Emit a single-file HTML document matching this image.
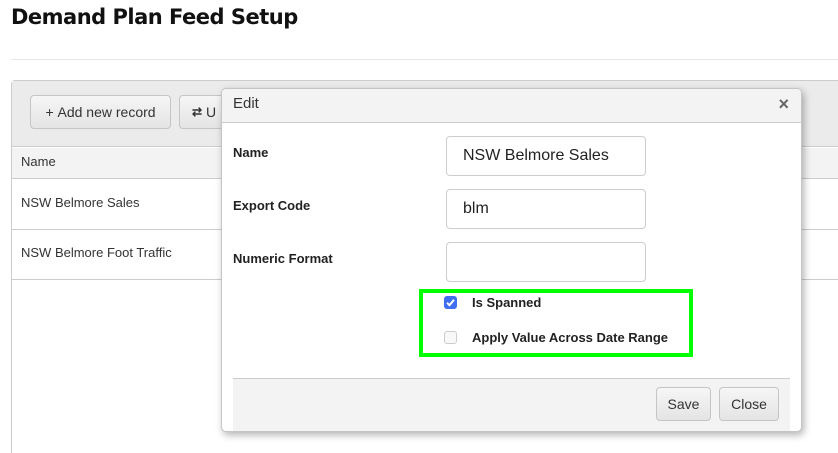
<!DOCTYPE html>
<html><head><meta charset="utf-8"><style>
*{box-sizing:border-box}
html,body{margin:0;width:838px;height:453px;overflow:hidden}
body{background:#fff;font-family:"Liberation Sans",sans-serif;color:#333;position:relative}
.abs{position:absolute}
h1{position:absolute;left:11px;top:5px;margin:0;font-family:"DejaVu Sans","Liberation Sans",sans-serif;font-size:21px;font-weight:bold;color:#111;letter-spacing:-0.5px}
.hr{left:11px;top:59px;width:827px;height:1px;background:#e6e6e6}
.grid{left:11px;top:80px;width:840px;height:380px;border:1px solid #ccc;border-radius:4px 0 0 0}
.tool{left:12px;top:81px;width:830px;height:66px;background:#ebebeb;border-bottom:1px solid #ccc}
.btn{border:1px solid #c5c5c5;border-radius:4px;background:linear-gradient(#f6f6f6,#e4e4e4);font-size:14px;color:#333;display:flex;align-items:center;justify-content:center}
.head{left:12px;top:148px;width:830px;height:31px;background:#f3f3f3;border-bottom:1px solid #ccc;font-size:13px;padding:6px 9px}
.row{left:12px;width:830px;height:50px;border-bottom:1px solid #ccc;font-size:13px;padding:15px 9px}
.dlg{left:221px;top:88px;width:581px;height:344px;background:#fff;border:1px solid #c5c5c5;border-radius:5px;box-shadow:2px 3px 8px rgba(0,0,0,.3);overflow:hidden}
.title{left:0;top:0;width:100%;height:34px;background:#f3f3f3;border-bottom:1px solid #ccc;font-size:15px;padding:6px 11px;color:#333}
.lbl{left:11px;font-size:13px;font-weight:bold;color:#222}
.inp{left:224px;width:200px;height:40px;border:1px solid #ccc;border-radius:4px;font-size:16px;padding:10px 16px;color:#222}
.foot{left:11px;top:289px;width:557px;height:55px;background:#f3f3f3;border-top:1px solid #ccc}
.green{left:419px;top:289px;width:274px;height:68px;border:4px solid #00ff00}
.cb{width:13px;height:13px;border-radius:3px}
.cl{font-size:13px;font-weight:bold;color:#222}
</style></head><body>
<h1>Demand Plan Feed Setup</h1>
<div class="abs hr"></div>
<div class="abs grid"></div>
<div class="abs tool"></div>
<div class="abs btn" style="left:30px;top:95px;width:141px;height:34px">+&nbsp;Add new record</div>
<div class="abs btn" style="left:179px;top:95px;width:60px;height:34px;justify-content:flex-start;padding-left:12px"><span style="font-size:12px;font-weight:bold">⇄</span>&nbsp;U</div>
<div class="abs head">Name</div>
<div class="abs row" style="top:180px">NSW Belmore Sales</div>
<div class="abs row" style="top:230px">NSW Belmore Foot Traffic</div>

<div class="abs dlg">
<div class="abs title">Edit</div>
<div class="abs" style="right:12px;top:5px;font-size:18px;color:#666;font-weight:bold">×</div>
<div class="abs lbl" style="top:56px">Name</div>
<div class="abs lbl" style="top:109px">Export Code</div>
<div class="abs lbl" style="top:162px">Numeric Format</div>
<div class="abs inp" style="top:47px">NSW Belmore Sales</div>
<div class="abs inp" style="top:100px">blm</div>
<div class="abs inp" style="top:153px"></div>
<div class="abs foot"></div>
<div class="abs btn" style="left:434px;top:298px;width:55px;height:34px">Save</div>
<div class="abs btn" style="left:497px;top:298px;width:60px;height:34px">Close</div>
</div>

<div class="abs green"></div>
<svg class="abs" style="left:444px;top:296px" width="13" height="13"><rect width="13" height="13" rx="3" fill="#3f6ff0"/><path d="M3 6.8 L5.5 9.2 L10 3.8" stroke="#fff" stroke-width="2" fill="none"/></svg>
<div class="abs cl" style="left:472px;top:295px">Is Spanned</div>
<div class="abs cb" style="left:444px;top:331px;border:1px solid #ccc;background:#f8f8f8"></div>
<div class="abs cl" style="left:472px;top:330px">Apply Value Across Date Range</div>
</body></html>
